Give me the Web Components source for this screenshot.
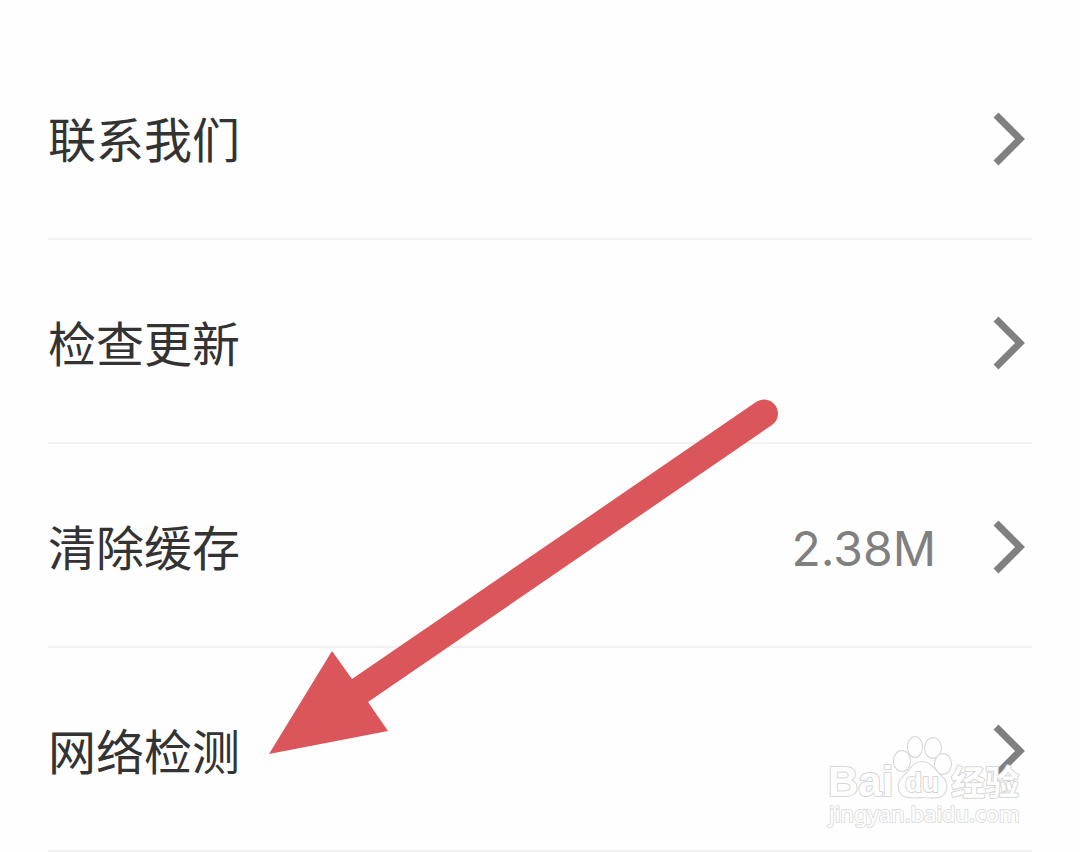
<!DOCTYPE html>
<html lang="zh-CN">
<head>
<meta charset="utf-8">
<meta name="viewport" content="width=device-width, initial-scale=1">
<title>设置</title>
<style>
body { margin: 0; background: #fefefe; font-family: Inter, "Noto Sans CJK SC", sans-serif; }
</style>
</head>
<body>
<settings-page>
  <settings-row>联系我们</settings-row>
  <settings-row>检查更新</settings-row>
  <settings-row>清除缓存<span slot="value">2.38M</span></settings-row>
  <settings-row>网络检测</settings-row>
  <pointer-arrow slot="overlay"></pointer-arrow>
  <site-watermark slot="overlay"></site-watermark>
</settings-page>
<script>
class BaseElement extends HTMLElement {
  constructor() {
    super();
    this.attachShadow({ mode: "open" }).innerHTML = this.constructor.markup;
  }
}

customElements.define("settings-page", class extends BaseElement {
  static markup = `
    <style>
      :host { display: block; position: relative; box-sizing: border-box; padding: 36px 48px 0; }
      main { display: flex; flex-direction: column; }
    </style>
    <main><slot></slot></main>
    <slot name="overlay"></slot>`;
});

customElements.define("settings-row", class extends BaseElement {
  static markup = `
    <style>
      :host { display: block; border-bottom: 2px solid #f1f1f1; }
      button {
        display: flex; align-items: center; box-sizing: border-box;
        width: 100%; min-height: 202px; margin: 0; padding: 4px 6px 0 0;
        border: 0; background: none; color: #333; cursor: pointer;
        font: inherit; font-size: 48px; line-height: 72px; text-align: left;
      }
      .label, .value { padding-top: 4px; }
      .label { flex: 1; }
      .value { color: #808080; margin-right: 56px; }
      svg { display: block; flex: none; width: 34px; height: 56px; }
    </style>
    <button type="button">
      <span class="label"><slot></slot></span>
      <span class="value"><slot name="value"></slot></span>
      <svg viewBox="0 0 34 56" fill="none" stroke="#808080" stroke-width="7" aria-hidden="true"><path d="M4 4 28 28 4 52"/></svg>
    </button>`;
});

customElements.define("pointer-arrow", class extends BaseElement {
  static markup = `
    <style>
      :host { display: block; position: absolute; left: 268px; top: 398px; pointer-events: none; }
      svg { display: block; }
    </style>
    <svg width="512" height="358" viewBox="268 398 512 358" fill="#db565b" aria-hidden="true">
      <path d="M269 754 332 651 352 679 756 402A14 14 0 0 1 772 425L368 702 388 731Z"/>
    </svg>`;
});

customElements.define("site-watermark", class extends BaseElement {
  static markup = `
    <style>
      :host { display: block; position: absolute; right: 50px; bottom: 20px; pointer-events: none; }
      svg { display: block; }
      g { fill: #fefefe; stroke: #d6d6d6; stroke-width: 2px; paint-order: stroke; stroke-linejoin: round; }
      .brand { font: bold 42px "Liberation Sans", sans-serif; }
      .du { font: bold 28px "Liberation Sans", sans-serif; }
      .cjk { font: bold 34px "Noto Sans CJK SC", sans-serif; }
      .url { font: 22px "Noto Sans", sans-serif; stroke: #e0e0e0; }
    </style>
    <svg width="210" height="102" viewBox="820 730 210 102">
      <g>
        <text class="brand" x="828" y="796">Bai</text>
        <ellipse cx="902" cy="761" rx="8" ry="10"/>
        <ellipse cx="915" cy="747" rx="7" ry="10"/>
        <ellipse cx="933" cy="748" rx="8" ry="10"/>
        <ellipse cx="943" cy="764" rx="8" ry="10"/>
        <path d="M922 762C914 762 911 769 905 775C899 781 898 784 899 789C901 798 909 798 922 797C935 798 944 799 946 789C948 782 943 778 939 774C933 768 930 762 922 762Z"/>
        <text class="du" x="905" y="792">du</text>
        <text class="cjk" x="951" y="795">经验</text>
        <text class="url" x="829" y="822">jingyan.baidu.com</text>
      </g>
    </svg>`;
});
</script>
</body>
</html>
